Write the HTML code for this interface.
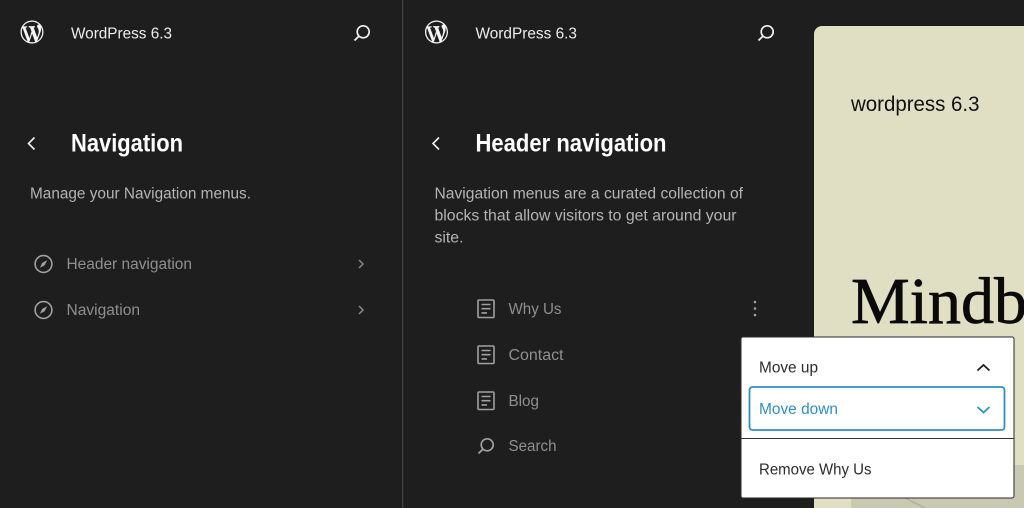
<!DOCTYPE html>
<html><head><meta charset="utf-8"><style>
html,body{margin:0;padding:0;background:#1e1e1e;width:1024px;height:508px;overflow:hidden}
svg{display:block}
text{font-family:"Liberation Sans",sans-serif}
</style></head><body>
<svg width="1024" height="508" viewBox="0 0 1024 508" xmlns="http://www.w3.org/2000/svg">
<defs>
<path id="wp" fill="#f4f4f4" d="M20 10c0-5.51-4.49-10-10-10C4.48 0 0 4.49 0 10c0 5.52 4.48 10 10 10 5.51 0 10-4.48 10-10zM7.78 15.37L4.37 6.22c.55-.02 1.17-.08 1.17-.08.5-.06.44-1.13-.06-1.11 0 0-1.45.11-2.37.11-.18 0-.37 0-.58-.01C4.12 2.69 6.87 1.11 10 1.11c2.33 0 4.45.87 6.05 2.34-.68-.11-1.65.39-1.65 1.58 0 .74.45 1.36.9 2.1.35.61.55 1.36.55 2.46 0 1.49-1.4 5-1.4 5l-3.03-8.37c.54-.02.82-.17.82-.17.5-.05.44-1.25-.06-1.22 0 0-1.44.12-2.38.12-.87 0-2.33-.12-2.33-.12-.5-.03-.56 1.2-.06 1.22l.92.08 1.26 3.41zM17.41 10c.24-.64.74-1.87.43-4.25.7 1.29 1.05 2.71 1.05 4.25 0 3.29-1.73 6.24-4.4 7.78.97-2.59 1.94-5.2 2.92-7.78zM6.1 18.09C3.12 16.65 1.11 13.53 1.11 10c0-1.3.23-2.48.72-3.59C3.25 10.3 4.67 14.2 6.1 18.09zm4.03-6.63l2.58 6.98c-.86.29-1.76.45-2.71.45-.79 0-1.57-.11-2.29-.33.81-2.38 1.62-4.74 2.42-7.1z"/>
<g id="search"><circle cx="13.200" cy="10.800" r="6" fill="none" stroke-width="1.700"/><path d="M8.800 15.200 4.500 19.500" fill="none" stroke-width="1.800"/></g>
<g id="compass"><circle cx="12" cy="12" r="8.400" fill="none" stroke="#a0a0a0" stroke-width="1.600"/><path d="M15.700 8.300 13.200 13.200 8.300 15.700 10.800 10.800Z" fill="#a0a0a0"/></g>
<g id="page" fill="none" stroke="#a0a0a0" stroke-width="1.600"><rect x="4.500" y="3" width="16" height="17.500" rx="1"/><path d="M8 7.500H17M8 11.700H17M8 15.900H13.500"/></g>
</defs>

<rect width="1024" height="508" fill="#1e1e1e"/>
<rect x="402" y="0" width="1.200" height="508" fill="#444"/>

<!-- Left panel -->
<use href="#wp" transform="translate(20.500,20.500) scale(1.150)"/>
<text x="71" y="38.500" font-size="15.500" fill="#ededed" textLength="101" lengthAdjust="spacingAndGlyphs">WordPress 6.3</text>
<use href="#search" stroke="#f0f0f0" transform="translate(350,21)"/>
<path d="M34.500 137.500 28.500 143.500 34.500 149.500" fill="none" stroke="#f0f0f0" stroke-width="1.600"/>
<text x="71" y="151.500" font-size="25" font-weight="700" fill="#fff" textLength="112" lengthAdjust="spacingAndGlyphs">Navigation</text>
<text x="30" y="198.500" font-size="15.500" fill="#b4b4b4" textLength="221" lengthAdjust="spacingAndGlyphs">Manage your Navigation menus.</text>
<use href="#compass" transform="translate(31.500,252)"/>
<text x="66.500" y="269" font-size="15.500" fill="#8f8f8f" textLength="125.500" lengthAdjust="spacingAndGlyphs">Header navigation</text>
<path d="M359 260 363 264 359 268" fill="none" stroke="#8a8a8a" stroke-width="1.500"/>
<use href="#compass" transform="translate(31.500,298)"/>
<text x="66.500" y="315" font-size="15.500" fill="#8f8f8f" textLength="73.500" lengthAdjust="spacingAndGlyphs">Navigation</text>
<path d="M359 306 363 310 359 314" fill="none" stroke="#8a8a8a" stroke-width="1.500"/>

<!-- Middle panel -->
<use href="#wp" transform="translate(425,20.500) scale(1.150)"/>
<text x="475.500" y="38.500" font-size="15.500" fill="#ededed" textLength="101.500" lengthAdjust="spacingAndGlyphs">WordPress 6.3</text>
<use href="#search" stroke="#f0f0f0" transform="translate(754,21)"/>
<path d="M439 137.500 433 143.500 439 149.500" fill="none" stroke="#f0f0f0" stroke-width="1.600"/>
<text x="475.500" y="151.500" font-size="25" font-weight="700" fill="#fff" textLength="191" lengthAdjust="spacingAndGlyphs">Header navigation</text>
<text x="434.500" y="198.500" font-size="15.500" fill="#b4b4b4" textLength="308.500" lengthAdjust="spacingAndGlyphs">Navigation menus are a curated collection of</text>
<text x="434.500" y="220.500" font-size="15.500" fill="#b4b4b4" textLength="302" lengthAdjust="spacingAndGlyphs">blocks that allow visitors to get around your</text>
<text x="434.500" y="242.500" font-size="15.500" fill="#b4b4b4" textLength="29" lengthAdjust="spacingAndGlyphs">site.</text>

<use href="#page" transform="translate(473.500,297)"/>
<text x="508.500" y="314" font-size="15.500" fill="#8f8f8f" textLength="53" lengthAdjust="spacingAndGlyphs">Why Us</text>
<use href="#page" transform="translate(473.500,343)"/>
<text x="508.500" y="360" font-size="15.500" fill="#8f8f8f" textLength="55" lengthAdjust="spacingAndGlyphs">Contact</text>
<use href="#page" transform="translate(473.500,389)"/>
<text x="508.500" y="406" font-size="15.500" fill="#8f8f8f" textLength="30.500" lengthAdjust="spacingAndGlyphs">Blog</text>
<use href="#search" stroke="#a0a0a0" transform="translate(474,434)"/>
<text x="508.500" y="451" font-size="15.500" fill="#8f8f8f" textLength="48" lengthAdjust="spacingAndGlyphs">Search</text>
<g fill="#a0a0a0"><circle cx="755" cy="302" r="1.300"/><circle cx="755" cy="308.500" r="1.300"/><circle cx="755" cy="315" r="1.300"/></g>

<!-- Canvas -->
<path d="M1024 26H822a8 8 0 0 0-8 8V508H1024Z" fill="#e0dfc3"/>
<text x="851" y="111" font-size="21" fill="#111" textLength="128.500" lengthAdjust="spacingAndGlyphs">wordpress 6.3</text>
<text x="851" y="323" font-size="66" fill="#0a0a0a" stroke="#0a0a0a" stroke-width="0.700" style="font-family:'Liberation Serif',serif">Mindb</text>
<rect x="851" y="465" width="173" height="43" fill="#c9c8b1"/>
<path d="M905 498 925 508" stroke="#a9a897" stroke-width="1" fill="none"/>

<!-- Popover -->
<rect x="741" y="337" width="273" height="161" rx="2" fill="#fff" stroke="#2a2a2a" stroke-width="1"/>
<text x="759" y="372.500" font-size="15.500" fill="#2b2b2b" textLength="59" lengthAdjust="spacingAndGlyphs">Move up</text>
<path d="M977.500 370.500 983.500 365 989.500 370.500" fill="none" stroke="#1e1e1e" stroke-width="1.800"/>
<rect x="749.500" y="387" width="255" height="43" rx="3" fill="#fff" stroke="#2f8fc4" stroke-width="1.800"/>
<text x="759" y="414" font-size="15.500" fill="#2f8fc4" textLength="79" lengthAdjust="spacingAndGlyphs">Move down</text>
<path d="M977.500 407 983.500 412.500 989.500 407" fill="none" stroke="#2f8fc4" stroke-width="1.800"/>
<rect x="741" y="438" width="273" height="1" fill="#333"/>
<text x="759" y="474.500" font-size="15.500" fill="#2b2b2b" textLength="112.500" lengthAdjust="spacingAndGlyphs">Remove Why Us</text>
</svg>
</body></html>
